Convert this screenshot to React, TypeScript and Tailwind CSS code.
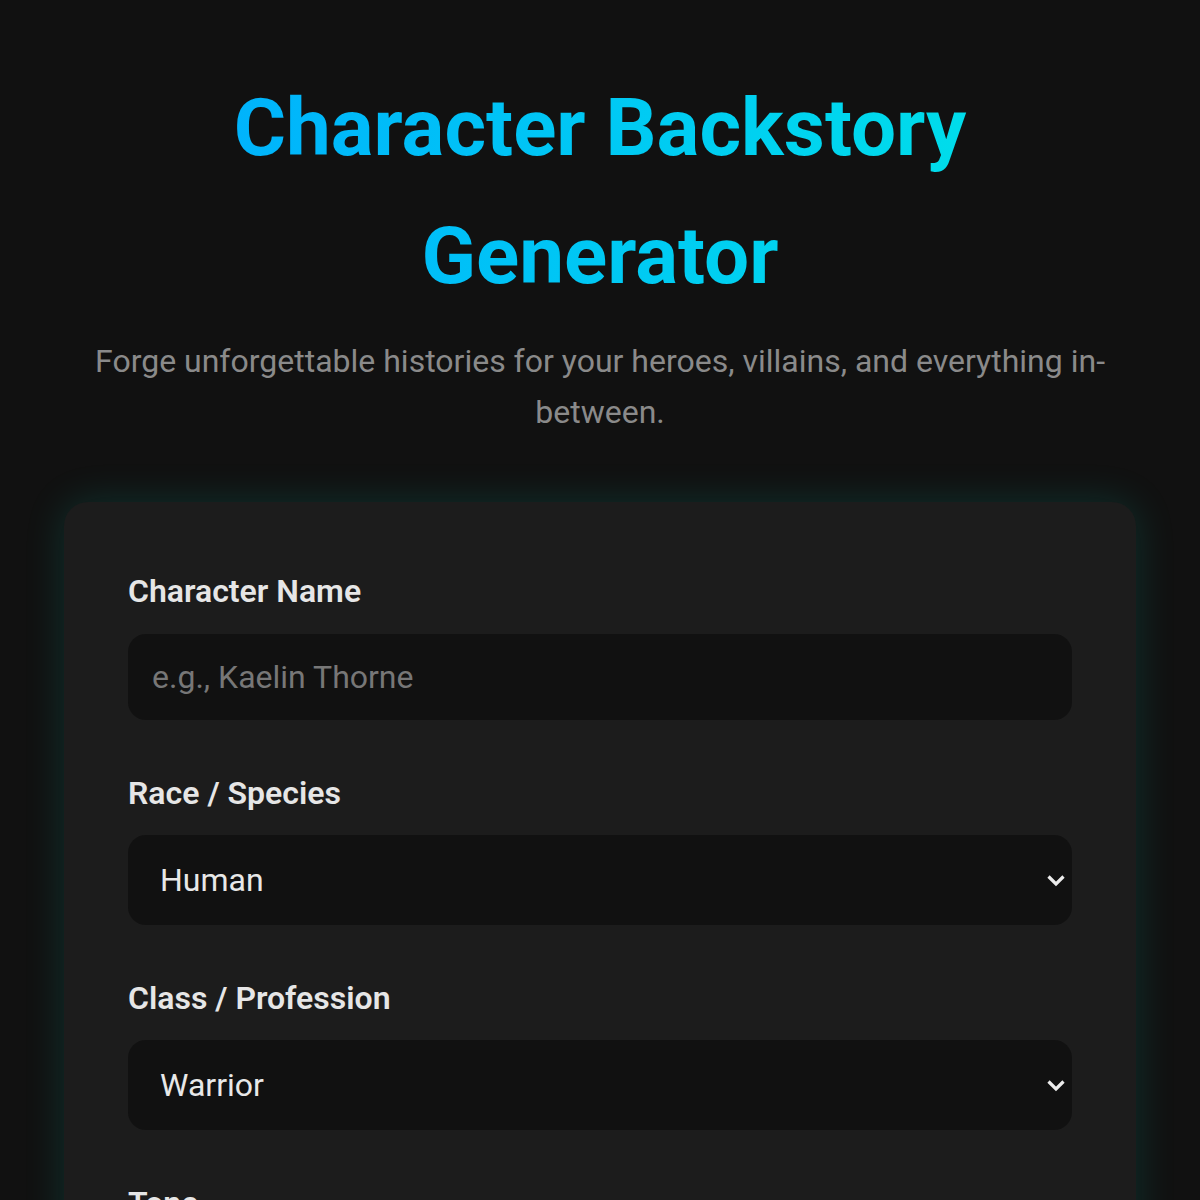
import React from "react";

function Chevron() {
  return (
    <svg
      className="pointer-events-none absolute right-[6px] top-1/2 -translate-y-1/2"
      width="20"
      height="20"
      viewBox="0 0 20 20"
      fill="none"
    >
      <path d="M2.5 6.5l7.5 7.5 7.5-7.5" stroke="#ececec" strokeWidth="3.2" strokeLinecap="butt" strokeLinejoin="miter" />
    </svg>
  );
}

function SelectField({ label, value, options }: { label: string; value: string; options: string[] }) {
  return (
    <div className="mb-[48px]">
      <label className="block text-[32px] leading-[1.6] font-semibold text-[#e6e6e6] mb-[16px]">{label}</label>
      <div className="relative">
        <select
          defaultValue={value}
          className="block w-full h-[90px] appearance-none rounded-[18px] bg-[#111111] pl-[32px] pr-[60px] text-[32px] text-[#e8e8e8] outline-none border-0"
          style={{ fontFamily: "Roboto, sans-serif" }}
        >
          {options.map((o) => (
            <option key={o}>{o}</option>
          ))}
        </select>
        <Chevron />
      </div>
    </div>
  );
}

export default function App() {
  return (
    <div
      className="min-h-screen bg-[#111111] text-white"
      style={{ fontFamily: "Roboto, 'Noto Sans', sans-serif" }}
    >
      <div className="mx-auto w-[1072px] pt-[64px]">
        <div className="text-center">
          <h1 className="inline-block bg-gradient-to-r from-[#00a9ff] to-[#00e6e6] bg-clip-text text-transparent text-[80px] leading-[128px] font-bold">
            Character Backstory Generator
          </h1>
          <p className="mt-[16px] text-[32px] leading-[1.6] text-[#8a8a8a]">
            Forge unforgettable histories for your heroes, villains, and everything in-between.
          </p>
        </div>

        <div className="mt-[64px] rounded-[24px] bg-[#1c1c1c] px-[64px] pt-[64px] pb-[64px] shadow-[0_0_40px_rgba(0,220,190,0.16)]">
          <div className="mb-[48px]">
            <label className="block text-[32px] leading-[1.6] font-semibold text-[#e6e6e6] mb-[16px]">
              Character Name
            </label>
            <input
              type="text"
              placeholder="e.g., Kaelin Thorne"
              className="block w-full h-[86px] rounded-[18px] bg-[#111111] px-[24px] text-[32px] text-[#e8e8e8] placeholder:text-[#777777] outline-none border-0"
            />
          </div>
          <SelectField label="Race / Species" value="Human" options={["Human", "Elf", "Dwarf", "Orc", "Halfling"]} />
          <SelectField label="Class / Profession" value="Warrior" options={["Warrior", "Mage", "Rogue", "Cleric", "Ranger"]} />
          <SelectField label="Tone" value="Heroic" options={["Heroic", "Tragic", "Dark", "Comedic"]} />
        </div>
      </div>
    </div>
  );
}
